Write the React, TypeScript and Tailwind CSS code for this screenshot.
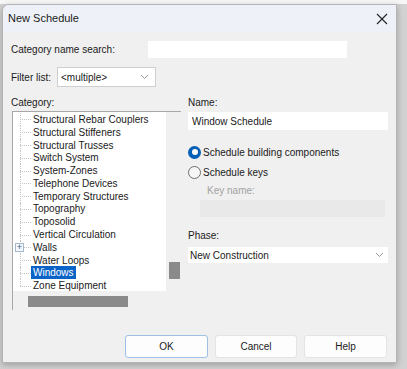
import React from "react";

const items = [
  "Structural Rebar Couplers",
  "Structural Stiffeners",
  "Structural Trusses",
  "Switch System",
  "System-Zones",
  "Telephone Devices",
  "Temporary Structures",
  "Topography",
  "Toposolid",
  "Vertical Circulation",
  "Walls",
  "Water Loops",
  "Windows",
  "Zone Equipment",
];

function Chevron() {
  return (
    <svg width="9" height="6" viewBox="0 0 9 6" className="shrink-0">
      <path d="M1 1l3.5 3.5L8 1" fill="none" stroke="#9a9a9a" strokeWidth="1" />
    </svg>
  );
}

function TreeRow({ label, last, plus, selected }: { label: string; last: boolean; plus?: boolean; selected?: boolean }) {
  return (
    <div className="flex h-[12.8px] items-center">
      <div className="relative h-full w-[18px] shrink-0">
        <div className={`absolute left-[7px] top-0 w-0 border-l border-dotted border-[#c4c4c4] ${last ? "h-1/2" : "h-full"}`} />
        <div className="absolute left-[7px] top-1/2 h-0 w-[11px] border-t border-dotted border-[#c4c4c4]" />
        {plus && (
          <div className="absolute left-[2px] top-[2px] flex h-[9px] w-[9px] items-center justify-center border border-[#a8b8cc] bg-[#f4f7fb] text-[9px] leading-none text-[#3a5a8a]">
            +
          </div>
        )}
      </div>
      <span
        className={`px-[2px] leading-[13px] ${selected ? "bg-[#0a64c8] text-white" : "text-[#1a1a1a]"}`}
      >
        {label}
      </span>
    </div>
  );
}

function Radio({ checked, label }: { checked?: boolean; label: string }) {
  return (
    <div className="flex h-[14px] items-center">
      {checked ? (
        <div className="flex h-[13px] w-[13px] items-center justify-center rounded-full bg-[#0560b6]">
          <div className="h-[6px] w-[6px] rounded-full bg-white" />
        </div>
      ) : (
        <div className="h-[13px] w-[13px] rounded-full border border-[#6e6e6e] bg-[#f6f6f6]" />
      )}
      <span className="ml-[2px] text-[10px] text-[#1a1a1a]">{label}</span>
    </div>
  );
}

export default function App() {
  return (
    <div className="h-[369px] w-[407px] overflow-hidden bg-[#d2d2d2] font-['Liberation_Sans',Arial,sans-serif]">
      <div className="h-[4px] bg-[#f6f6f6]" />
      <div className="ml-[2px] flex h-[359px] w-[395px] flex-col overflow-hidden rounded-tl-[7px] border border-[#b4b4b4] bg-[#f0f0f0] shadow-[0_2px_6px_rgba(0,0,0,0.25)]">
        <div className="flex h-[27px] shrink-0 items-center justify-between bg-[#eef2f8] pl-[5px] pr-[6px]">
          <span className="text-[11px] text-[#1a1a1a]">New Schedule</span>
          <svg width="12" height="12" viewBox="0 0 12 12" className="mr-[2px]">
            <path d="M1 1l10 10M11 1L1 11" stroke="#222" strokeWidth="1.1" />
          </svg>
        </div>

        <div className="pl-[8px] pt-[9px]">
          <div className="flex h-[17px] items-center">
            <span className="w-[137px] text-[10px] text-[#1a1a1a]">Category name search:</span>
            <div className="h-[17px] w-[199px] bg-white" />
          </div>
          <div className="mt-[9px] flex h-[20px] items-center">
            <span className="w-[46px] text-[10px] text-[#1a1a1a]">Filter list:</span>
            <div className="flex h-[20px] w-[99px] items-center justify-between border border-[#cfcfcf] bg-white pl-[3px] pr-[6px]">
              <span className="text-[10px] text-[#1a1a1a]">&lt;multiple&gt;</span>
              <Chevron />
            </div>
          </div>

          <div className="mt-[9px] flex">
            <div className="w-[170px] shrink-0">
              <div className="h-[13px] text-[10px] leading-[13px] text-[#1a1a1a]">Category:</div>
              <div className="ml-[1px] mt-[2px] h-[199px] w-[169px] border-l border-t border-[#a8a8a8]">
                <div className="flex h-[179px]">
                  <div className="w-[153px] overflow-hidden bg-white pt-[1px] text-[10px]">
                    {items.map((it, i) => (
                      <TreeRow
                        key={it}
                        label={it}
                        last={i === items.length - 1}
                        plus={it === "Walls"}
                        selected={it === "Windows"}
                      />
                    ))}
                  </div>
                  <div className="flex w-[15px] flex-col justify-end pb-[12px] pl-[3px]">
                    <div className="h-[17px] w-[11px] bg-[#8a8a8a]" />
                  </div>
                </div>
                <div className="pl-[15px] pt-[5px]">
                  <div className="h-[11px] w-[100px] bg-[#8a8a8a]" />
                </div>
              </div>
            </div>

            <div className="ml-[7px] w-[200px]">
              <div className="h-[13px] text-[10px] leading-[13px] text-[#1a1a1a]">Name:</div>
              <div className="mt-[3px] flex h-[18px] items-center bg-white pl-[4px] text-[10px] text-[#1a1a1a]">
                Window Schedule
              </div>
              <div className="mt-[15px]">
                <Radio checked label="Schedule building components" />
              </div>
              <div className="mt-[6px]">
                <Radio label="Schedule keys" />
              </div>
              <div className="mt-[6px] h-[12px] pl-[19px] text-[10px] leading-[12px] text-[#a2a2a2]">Key name:</div>
              <div className="ml-[12px] mt-[3px] h-[17px] w-[185px] bg-[#e9e9e9]" />
              <div className="mt-[13px] h-[12px] text-[10px] leading-[12px] text-[#1a1a1a]">Phase:</div>
              <div className="mt-[5px] flex h-[16px] items-center justify-between bg-white pl-[2px] pr-[4px]">
                <span className="text-[10px] text-[#1a1a1a]">New Construction</span>
                <Chevron />
              </div>
            </div>
          </div>
        </div>

        <div className="mt-auto mb-[4px] flex justify-end gap-[7px] pr-[9px]">
          <button className="h-[23px] w-[83px] rounded-[3px] border border-[#9ec0e6] bg-[#fdfdfd] text-[10px] text-[#1a1a1a]">
            OK
          </button>
          <button className="h-[23px] w-[82px] rounded-[3px] border border-[#e4e4e4] bg-[#fdfdfd] text-[10px] text-[#1a1a1a]">
            Cancel
          </button>
          <button className="h-[23px] w-[83px] rounded-[3px] border border-[#e4e4e4] bg-[#fdfdfd] text-[10px] text-[#1a1a1a]">
            Help
          </button>
        </div>
      </div>
    </div>
  );
}
